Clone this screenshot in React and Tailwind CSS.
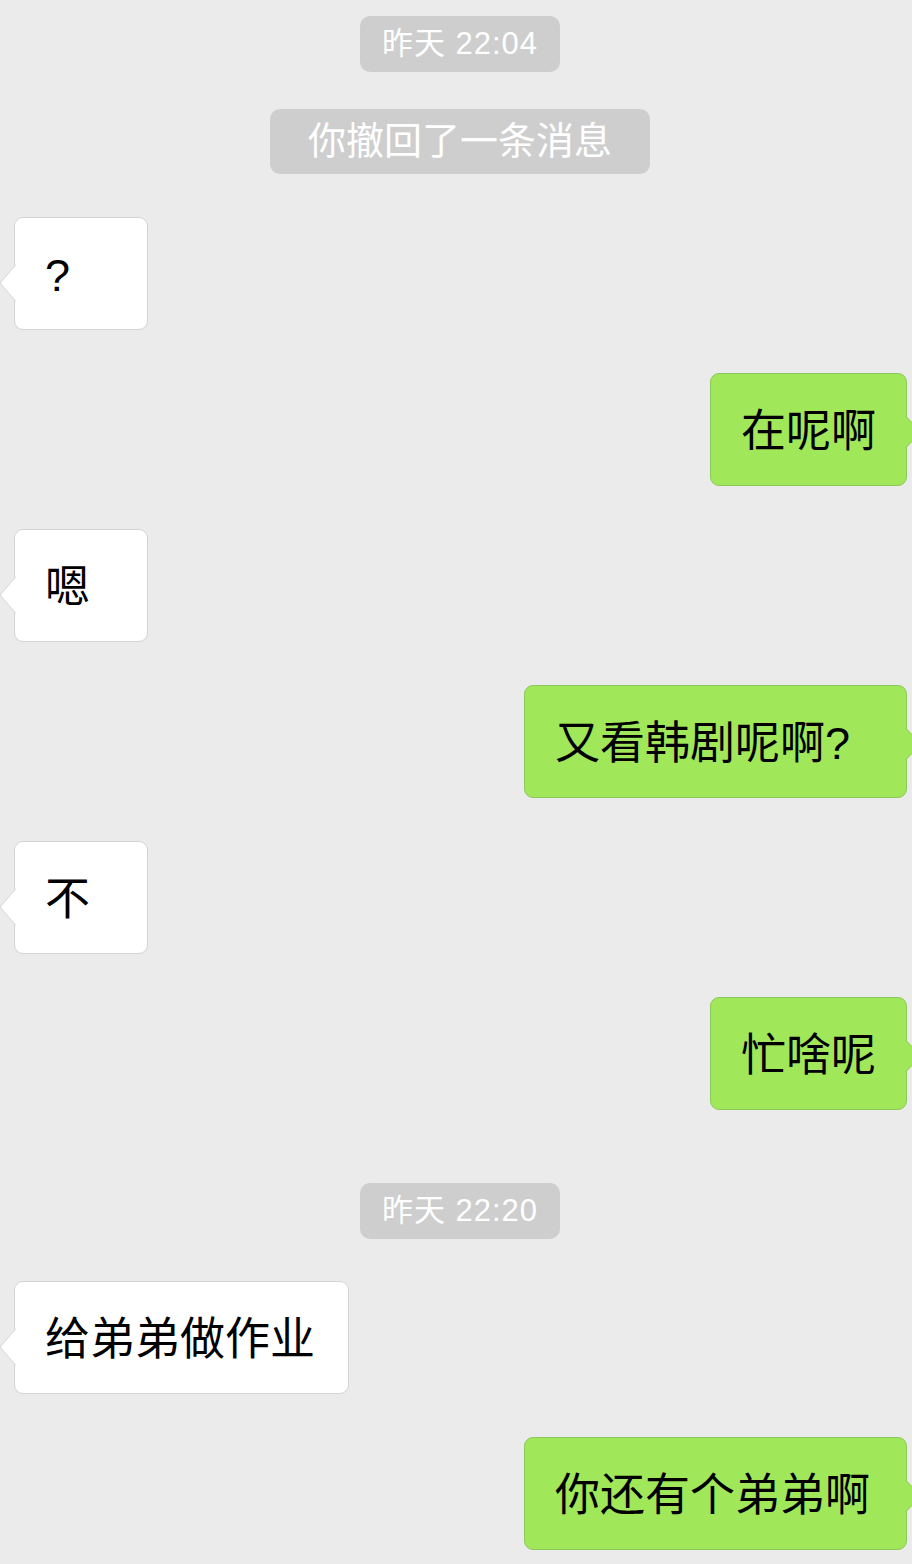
import React from 'react'

// WeChat-style chat log
const items = [
  { type: 'time', text: '昨天 22:04', mt: 'mt-[16px]' },
  { type: 'notice', text: '你撤回了一条消息', mt: 'mt-[37px]' },
  { type: 'in', text: '?', w: 'w-[134px]', mt: 'mt-[43px]' },
  { type: 'out', text: '在呢啊', w: 'w-[197px]', mt: 'mt-[43px]' },
  { type: 'in', text: '嗯', w: 'w-[134px]', mt: 'mt-[43px]' },
  { type: 'out', text: '又看韩剧呢啊?', w: 'w-[383px]', mt: 'mt-[43px]' },
  { type: 'in', text: '不', w: 'w-[134px]', mt: 'mt-[43px]' },
  { type: 'out', text: '忙啥呢', w: 'w-[197px]', mt: 'mt-[43px]' },
  { type: 'time', text: '昨天 22:20', mt: 'mt-[73px]' },
  { type: 'in', text: '给弟弟做作业', w: 'w-[335px]', mt: 'mt-[42px]' },
  { type: 'out', text: '你还有个弟弟啊', w: 'w-[383px]', mt: 'mt-[43px]' },
]

function Tail({ side }) {
  if (side === 'in') {
    return (
      <svg width="17" height="38" viewBox="0 0 17 38" className="absolute left-[-16px] top-[46px]">
        <path d="M17 0 L1 19 L17 38 Z" fill="#ffffff" />
        <path d="M17 0.5 L1 19 L17 37.5" fill="none" stroke="#d4d4d4" strokeWidth="1" />
      </svg>
    )
  }
  return (
    <svg width="17" height="34" viewBox="0 0 17 34" className="absolute right-[-16px] top-[41px]">
      <path d="M0 0 L16 17 L0 34 Z" fill="#a0e75a" />
      <path d="M0 0.5 L16 17 L0 33.5" fill="none" stroke="#8cc95b" strokeWidth="1" />
    </svg>
  )
}

function Bubble({ m }) {
  const incoming = m.type === 'in'
  return (
    <div className={`${m.mt} flex ${incoming ? 'justify-start pl-[14px]' : 'justify-end pr-[5px]'}`}>
      <div
        className={`relative ${m.w} h-[113px] rounded-[9px] border flex items-center px-[30px] pt-[3px] text-[45px] leading-none text-black ${
          incoming ? 'bg-white border-[#d4d4d4]' : 'bg-[#a0e75a] border-[#8cc95b]'
        }`}
      >
        <span className="whitespace-nowrap">{m.text}</span>
        <Tail side={m.type} />
      </div>
    </div>
  )
}

export default function App() {
  return (
    <div className="w-[912px] h-[1564px] overflow-hidden bg-[#ebebeb] flex flex-col font-['Liberation_Sans','Noto_Sans_CJK_SC',sans-serif]">
      {items.map((m, i) => {
        if (m.type === 'time') {
          return (
            <div key={i} className={`${m.mt} flex justify-center pl-[8px]`}>
              <div className="w-[200px] h-[56px] rounded-[10px] bg-[#cecece] text-white text-[31px] flex items-center justify-center tracking-[1px]">
                {m.text}
              </div>
            </div>
          )
        }
        if (m.type === 'notice') {
          return (
            <div key={i} className={`${m.mt} flex justify-center pl-[8px]`}>
              <div className="w-[380px] h-[65px] rounded-[10px] bg-[#cecece] text-white text-[38px] flex items-center justify-center">
                {m.text}
              </div>
            </div>
          )
        }
        return <Bubble key={i} m={m} />
      })}
    </div>
  )
}
